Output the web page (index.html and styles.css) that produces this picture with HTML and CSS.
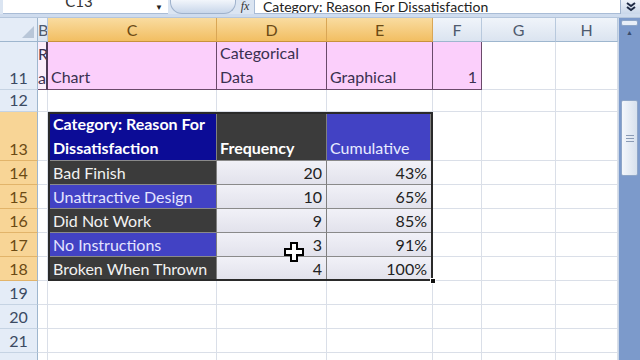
FILE: index.html
```html
<!DOCTYPE html>
<html lang="en">
<head>
  <meta charset="UTF-8" />
  <title>Dissatisfaction - Excel</title>
  <link rel="stylesheet" href="styles.css">
</head>
<body>
<div class="app">

  <div class="fbar">
    <div class="namebox"><span class="ref">C13</span><span class="caret">&#9660;</span></div>
    <div class="pill"></div>
    <div class="fx">fx</div>
    <div class="formula">Category: Reason For Dissatisfaction</div>
    <div class="expand">
      <svg width="10" height="10" viewBox="0 0 10 10"><path d="M1 1 L5 4 L9 1 M1 5 L5 8 L9 5" fill="none" stroke="#1d2a44" stroke-width="2"/></svg>
    </div>
  </div>
  <div class="band"></div>

  <div class="main">
    <div class="sheet">
      <!-- column headers -->
      <div class="corner"></div>
      <div class="ch">B</div>
      <div class="ch sel">C</div>
      <div class="ch sel">D</div>
      <div class="ch sel">E</div>
      <div class="ch">F</div>
      <div class="ch">G</div>
      <div class="ch">H</div>

      <!-- row 11 -->
      <div class="rh">11</div>
      <div class="c pink pb">R<br>a</div>
      <div class="c pink">Chart</div>
      <div class="c pink">Categorical<br>Data</div>
      <div class="c pink">Graphical</div>
      <div class="c pink num">1</div>
      <div class="c"></div>
      <div class="c"></div>

      <!-- row 12 -->
      <div class="rh">12</div>
      <div class="c"></div><div class="c"></div><div class="c"></div><div class="c"></div>
      <div class="c"></div><div class="c"></div><div class="c"></div>

      <!-- table C13:E18 -->
      <div class="tbl">
        <div class="t hd navy">Category: Reason For<br>Dissatisfaction</div>
        <div class="t hd grey">Frequency</div>
        <div class="t hd blue light">Cumulative</div>

        <div class="t grey">Bad Finish</div>
        <div class="t val">20</div>
        <div class="t val last">43%</div>

        <div class="t blue">Unattractive Design</div>
        <div class="t val">10</div>
        <div class="t val last">65%</div>

        <div class="t grey">Did Not Work</div>
        <div class="t val">9</div>
        <div class="t val last">85%</div>

        <div class="t blue">No Instructions</div>
        <div class="t val">3</div>
        <div class="t val last">91%</div>

        <div class="t grey end">Broken When Thrown</div>
        <div class="t val end">4</div>
        <div class="t val last end">100%</div>
        <div class="handle"></div>
      </div>

      <div class="rh sel">13</div><div class="c"></div><div class="c"></div><div class="c"></div><div class="c"></div>
      <div class="rh sel">14</div><div class="c"></div><div class="c"></div><div class="c"></div><div class="c"></div>
      <div class="rh sel">15</div><div class="c"></div><div class="c"></div><div class="c"></div><div class="c"></div>
      <div class="rh sel">16</div><div class="c"></div><div class="c"></div><div class="c"></div><div class="c"></div>
      <div class="rh sel">17</div><div class="c"></div><div class="c"></div><div class="c"></div><div class="c"></div>
      <div class="rh sel">18</div><div class="c"></div><div class="c"></div><div class="c"></div><div class="c"></div>

      <div class="rh">19</div>
      <div class="c"></div><div class="c"></div><div class="c"></div><div class="c"></div>
      <div class="c"></div><div class="c"></div><div class="c"></div>
      <div class="rh">20</div>
      <div class="c"></div><div class="c"></div><div class="c"></div><div class="c"></div>
      <div class="c"></div><div class="c"></div><div class="c"></div>
      <div class="rh">21</div>
      <div class="c"></div><div class="c"></div><div class="c"></div><div class="c"></div>
      <div class="c"></div><div class="c"></div><div class="c"></div>
      <div class="rh">22</div>
      <div class="c"></div><div class="c"></div><div class="c"></div><div class="c"></div>
      <div class="c"></div><div class="c"></div><div class="c"></div>
    </div>

    <div class="vscroll">
      <div class="split"></div>
      <div class="up">&#9650;</div>
      <div class="track"></div>
      <div class="thumb"><span></span></div>
      <div class="track grow"></div>
    </div>
  </div>

  <!-- mouse pointer over the sheet -->
  <svg class="cursor" width="20" height="20" viewBox="0 0 20 20">
    <path d="M7 1 H13 V7 H19 V13 H13 V19 H7 V13 H1 V7 H7 Z" fill="#fff" stroke="#000" stroke-width="2"/>
  </svg>
</div>
</body>
</html>
```

FILE: styles.css
```css
* { margin:0; padding:0; box-sizing:border-box; }
body { width:640px; height:360px; overflow:hidden; background:#fff; font-family:'Lato','Open Sans',sans-serif; }
.app { position:relative; width:640px; height:360px; overflow:hidden; display:flex; flex-direction:column; }

/* formula bar */
.fbar { height:14px; flex-shrink:0; display:flex; background:#dbe5f2; overflow:hidden; }
.namebox { width:165px; margin-left:3px; background:#fff; border-bottom:1px solid #a9bcd6; display:flex; justify-content:space-between; align-items:flex-end; padding:0 5px 0 0; overflow:hidden; }
.ref { flex:1; text-align:center; font-size:15px; line-height:14px; color:#333; margin-top:-6px; align-self:flex-start; }
.caret { font-size:8px; color:#222; line-height:12px; }
.pill { width:66px; margin-left:2px; background:linear-gradient(#f2f6fb,#c8d6ea); border:1px solid #9fb2cc; border-top:none; border-radius:0 0 12px 12px; }
.fx { width:18px; font-family:'Liberation Serif',serif; font-style:italic; font-size:12px; color:#333; line-height:12px; text-align:center; }
.formula { flex:1; background:#fff; border-left:1px solid #a9bcd6; border-bottom:1px solid #a9bcd6; padding-left:8px; font-size:14px; line-height:13px; color:#222; white-space:nowrap; overflow:hidden; }
.expand { width:20px; background:linear-gradient(#eef3fa,#c9d7ea); border-left:1px solid #9fb2cc; display:flex; align-items:center; justify-content:center; }
.band { height:4px; flex-shrink:0; background:#cfdcee; border-bottom:1px solid #b5c6dc; }

.main { flex:1; min-height:0; display:flex; overflow:hidden; }

/* grid */
.sheet { width:618px; display:grid; grid-template-columns:38px 10px 169px 110px 106px 49px 74px 62px; grid-template-rows:24px 48px 22px 49px repeat(9,24px); font-size:16px; }
.corner { background:#e4ecf7; border-right:1px solid #9eb6ce; border-bottom:1px solid #9eb6ce; position:relative; }
.corner::after { content:''; position:absolute; right:3px; bottom:3px; border-left:12px solid transparent; border-bottom:12px solid #b8c6d8; }
.ch { background:linear-gradient(#f0f4fa,#dbe4f0); border-right:1px solid #b8c9dd; border-bottom:1px solid #9eb6ce; color:#4f5b6e; text-align:center; line-height:23px; overflow:hidden; }
.ch.sel { background:linear-gradient(#f9dca0,#f2be62); border-right-color:#d9a655; border-bottom-color:#c8923c; color:#6b4a14; }
.rh { background:#e4ecf7; border-right:1px solid #9eb6ce; border-bottom:1px solid #c5d3e3; color:#3b4a63; display:flex; align-items:flex-end; justify-content:center; line-height:23px; }
.rh.sel { background:#f8d596; border-bottom-color:#e2b46a; color:#6b4a14; }
.c { border-right:1px solid #dadfe8; border-bottom:1px solid #dadfe8; line-height:24px; padding:0 3px; color:#333; overflow:hidden; white-space:nowrap; }
.pink { background:#fbcffb; border-right:1px solid #6a4a6a; border-bottom:1px solid #6a4a6a; display:flex; align-items:flex-end; padding-bottom:0; color:#3a3050; }
.pb { padding:0; background:#fbeefb; display:block; border-right:2px solid #4d3a55; }
.num { justify-content:flex-end; padding-right:4px; }

/* formatted table */
.tbl { grid-column:3 / 6; grid-row:4 / 10; border:2px solid #2a2a2a; display:grid; grid-template-columns:167px 110px 104px; grid-template-rows:47px 24px 24px 24px 24px 22px; position:relative; background:#fff; }
.t { border-right:1px solid #7f7f7f; border-bottom:1px solid #8a8a8a; line-height:23px; padding:0 3px; white-space:nowrap; }
.t.hd { display:flex; align-items:flex-end; font-weight:bold; color:#fff; line-height:24px; padding-bottom:0; }
.t.end { border-bottom:none; }
.t.last { border-right:none; }
.navy { background:#0c0c96; color:#fff; }
.grey { background:#3b3b3b; color:#f2f2f2; }
.blue { background:#4242c4; color:#e4e4ff; }
.t.hd.light { font-weight:normal; color:#e8ecff; }
.val { background:linear-gradient(#f1f1f7,#e2e2ec); text-align:right; color:#222; padding-right:4px; }
.handle { position:absolute; right:-5px; bottom:-5px; width:6px; height:6px; background:#111; border:1px solid #fff; }

/* vertical scroll bar */
.vscroll { width:22px; display:flex; flex-direction:column; background:#7c9acb; border-left:1px solid #c9d6e8; }
.split { height:6px; margin:2px 2px 0; background:#e9eff8; border:1px solid #8ea6c8; border-radius:2px; }
.up { height:12px; text-align:center; font-size:7px; color:#3a4c6c; line-height:12px; }
.track { height:62px; }
.track.grow { flex:1; height:auto; }
.thumb { height:76px; margin:0 2px; background:linear-gradient(90deg,#f4f7fb,#d7e1ee); border:1px solid #8ea6c8; border-radius:2px; display:flex; align-items:center; justify-content:center; }
.thumb span { width:8px; height:7px; border-top:1px solid #8a9bb5; border-bottom:1px solid #8a9bb5; position:relative; }
.thumb span::after { content:''; position:absolute; left:0; right:0; top:2px; border-top:1px solid #8a9bb5; }

.cursor { position:absolute; left:284px; top:242px; }
```
